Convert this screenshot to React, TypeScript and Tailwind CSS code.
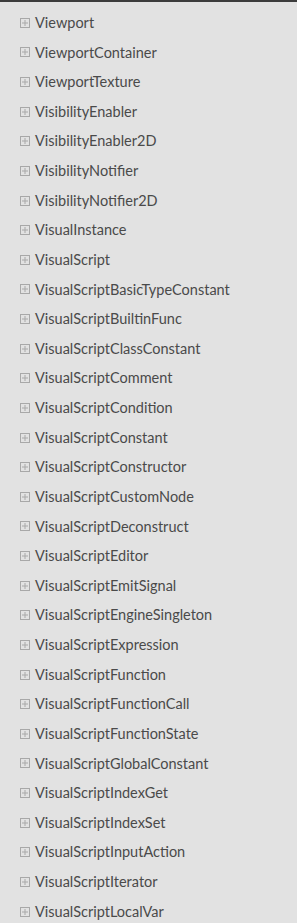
const items = [
  "Viewport",
  "ViewportContainer",
  "ViewportTexture",
  "VisibilityEnabler",
  "VisibilityEnabler2D",
  "VisibilityNotifier",
  "VisibilityNotifier2D",
  "VisualInstance",
  "VisualScript",
  "VisualScriptBasicTypeConstant",
  "VisualScriptBuiltinFunc",
  "VisualScriptClassConstant",
  "VisualScriptComment",
  "VisualScriptCondition",
  "VisualScriptConstant",
  "VisualScriptConstructor",
  "VisualScriptCustomNode",
  "VisualScriptDeconstruct",
  "VisualScriptEditor",
  "VisualScriptEmitSignal",
  "VisualScriptEngineSingleton",
  "VisualScriptExpression",
  "VisualScriptFunction",
  "VisualScriptFunctionCall",
  "VisualScriptFunctionState",
  "VisualScriptGlobalConstant",
  "VisualScriptIndexGet",
  "VisualScriptIndexSet",
  "VisualScriptInputAction",
  "VisualScriptIterator",
  "VisualScriptLocalVar",
];

function PlusBox() {
  return (
    <svg width="10" height="10" viewBox="0 0 10 10" className="shrink-0">
      <rect x="0.5" y="0.5" width="9" height="9" fill="none" stroke="#a8a8a8" strokeWidth="1" />
      <path d="M5 2v6M2 5h6" stroke="#a8a8a8" strokeWidth="1" />
    </svg>
  );
}

export default function App() {
  return (
    <div className="w-[297px] h-[923px] overflow-hidden bg-[#e2e2e2]" style={{ fontFamily: "Lato, 'Open Sans', sans-serif" }}>
      <div className="h-[2px] bg-[#3c3c3c]" />
      <ul className="pt-[6px] pl-[20px]">
        {items.map((name) => (
          <li key={name} className="flex items-center gap-[5px] h-[29.63px] text-[14.5px] text-[#4a4a4a]">
            <PlusBox />
            <span>{name}</span>
          </li>
        ))}
      </ul>
    </div>
  );
}
